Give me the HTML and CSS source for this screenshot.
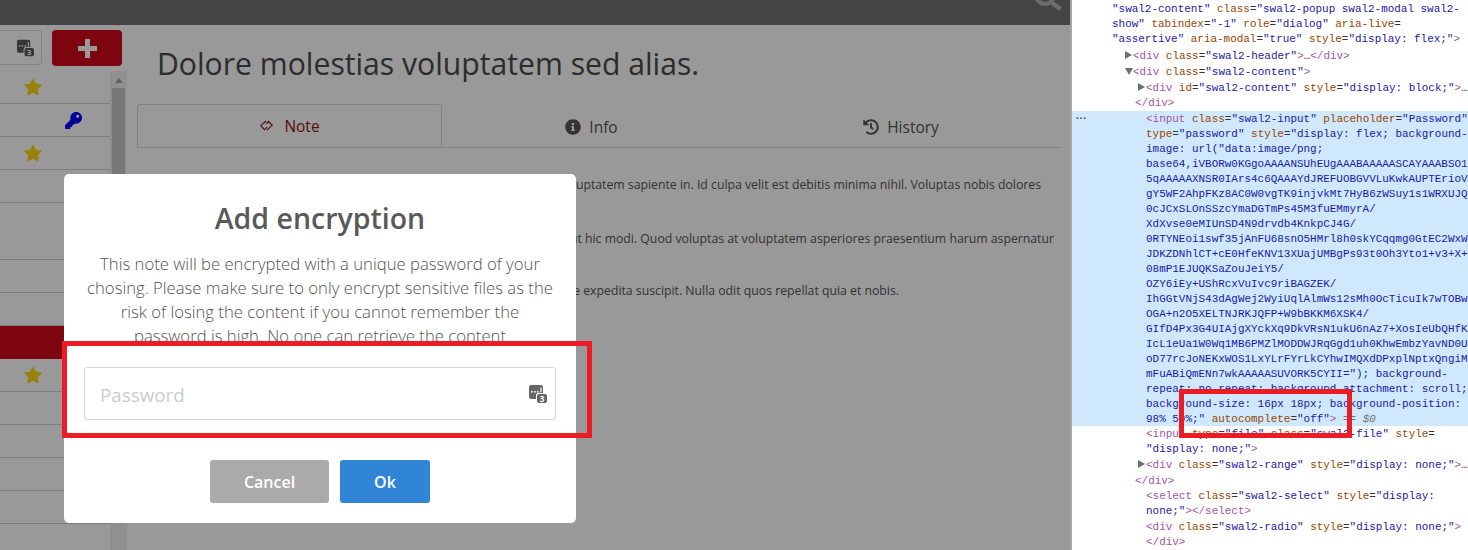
FILE: index.html
```html
<!DOCTYPE html>
<html lang="en">
<head>
<meta charset="utf-8">
<title>Add encryption</title>
<link rel="stylesheet" href="styles.css">
</head>
<body>
<svg class="defs" width="0" height="0" aria-hidden="true">
  <symbol id="star" viewBox="0 0 576 512"><path d="M259.3 17.8L194 150.2 47.9 171.5c-26.2 3.8-36.7 36.1-17.7 54.6l105.7 103-25 145.5c-4.5 26.3 23.2 46 46.4 33.7L288 439.6l130.7 68.7c23.2 12.2 50.9-7.4 46.4-33.7l-25-145.5 105.7-103c19-18.5 8.5-50.8-17.7-54.6L382 150.2 316.7 17.8c-11.7-23.6-45.6-23.9-57.4 0z"/></symbol>
  <symbol id="key" viewBox="0 0 512 512"><path d="M512 176.001C512 273.203 433.202 352 336 352c-11.22 0-22.19-1.062-32.827-3.069l-24.012 27.014A23.999 23.999 0 0 1 261.223 384H224v40c0 13.255-10.745 24-24 24h-40v40c0 13.255-10.745 24-24 24H24c-13.255 0-24-10.745-24-24v-78.059c0-6.365 2.529-12.47 7.029-16.971l161.802-161.802C163.108 213.814 160 195.271 160 176 160 78.798 238.797.001 335.999 0 433.488-.001 512 78.511 512 176.001zM336 128c0 26.51 21.49 48 48 48s48-21.49 48-48-21.49-48-48-48-48 21.49-48 48z"/></symbol>
  <symbol id="info" viewBox="0 0 512 512"><path d="M256 8C119.043 8 8 119.083 8 256c0 136.997 111.043 248 248 248s248-111.003 248-248C504 119.083 392.957 8 256 8zm0 110c23.196 0 42 18.804 42 42s-18.804 42-42 42-42-18.804-42-42 18.804-42 42-42zm56 254c0 6.627-5.373 12-12 12h-88c-6.627 0-12-5.373-12-12v-24c0-6.627 5.373-12 12-12h12v-64h-12c-6.627 0-12-5.373-12-12v-24c0-6.627 5.373-12 12-12h64c6.627 0 12 5.373 12 12v100h12c6.627 0 12 5.373 12 12v24z"/></symbol>
  <symbol id="history" viewBox="0 0 512 512"><path d="M504 255.531c.253 136.64-111.18 248.372-247.82 248.468-59.015.042-113.223-20.53-155.822-54.911-11.077-8.94-11.905-25.541-1.839-35.607l11.267-11.267c8.609-8.609 22.353-9.551 31.891-1.984C173.062 425.135 212.781 440 256 440c101.705 0 184-82.311 184-184 0-101.705-82.311-184-184-184-48.814 0-93.149 18.969-126.068 49.932l50.754 50.754c10.08 10.08 2.941 27.314-11.313 27.314H24c-8.837 0-16-7.163-16-16V38.627c0-14.254 17.234-21.393 27.314-11.314l49.372 49.372C129.209 34.136 189.552 8 256 8c136.81 0 247.747 110.78 248 247.531zm-180.912 78.784l9.823-12.63c8.138-10.463 6.253-25.542-4.21-33.679L288 256.349V152c0-13.255-10.745-24-24-24h-16c-13.255 0-24 10.745-24 24v135.651l65.409 50.874c10.463 8.137 25.541 6.253 33.679-4.21z"/></symbol>
  <symbol id="pw" viewBox="0 0 18 18">
    <path d="M2 0h10a2 2 0 0 1 2 2v6H9.500A2.500 2.500 0 0 0 7 10.500V14H2a2 2 0 0 1-2-2V2a2 2 0 0 1 2-2z"/>
    <rect x="8" y="9" width="10" height="9" rx="2"/>
    <g fill="#fff"><rect x="2" y="6" width="1.600" height="1.600"/><rect x="5" y="6" width="1.600" height="1.600"/><rect x="8" y="6" width="1.600" height="1.600"/><rect x="11.400" y="2.500" width="1.200" height="5"/></g>
  </symbol>
</svg>

<div class="page">
  <div class="app">
    <header class="topbar">
      <svg class="search" width="30" height="25" viewBox="0 0 30 25" aria-hidden="true"><circle cx="11" cy="-5" r="9" fill="none" stroke="currentColor" stroke-width="4"/><path d="M17 2l8 6" stroke="currentColor" stroke-width="4.5" stroke-linecap="round"/></svg>
    </header>
    <div class="workspace">
      <aside class="sidebar">
        <div class="toolbar">
          <div class="search-box"><svg class="pw-icon" width="17" height="18" viewBox="0 0 18 18"><use href="#pw"/><text class="pw-digit" x="13" y="16.500" text-anchor="middle">3</text></svg></div>
          <button class="add-btn" type="button"><span class="plus"></span></button>
        </div>
        <div class="list-wrap">
          <ul class="list">
            <li class="row"><svg class="star" width="18" height="16"><use href="#star"/></svg></li>
            <li class="row row-key"><svg class="key" width="17" height="17"><use href="#key"/></svg></li>
            <li class="row"><svg class="star" width="18" height="16"><use href="#star"/></svg></li>
            <li class="row"></li>
            <li class="row row-tall"></li>
            <li class="row"></li>
            <li class="row"></li>
            <li class="row row-active"></li>
            <li class="row"><svg class="star" width="18" height="16"><use href="#star"/></svg></li>
            <li class="row"></li>
            <li class="row"></li>
            <li class="row"></li>
            <li class="row"></li>
            <li class="row"></li>
          </ul>
          <div class="scrollbar"><div class="scroll-up"></div><div class="scroll-thumb"></div></div>
        </div>
      </aside>
      <main class="content">
        <h1 class="note-title">Dolore molestias voluptatem sed alias.</h1>
        <nav class="tabs">
          <a class="tab tab-active"><svg class="tab-icon-note" width="15" height="11" viewBox="0 0 15 11" aria-hidden="true"><path d="M7 1L1.800 5.700 5.500 9.600 8 7.200M8 10L13.200 5.300 9.500 1.400 7 3.800" fill="none" stroke="currentColor" stroke-width="1.100"/></svg>Note</a>
          <a class="tab"><svg class="tab-icon" width="16" height="16"><use href="#info"/></svg>Info</a>
          <a class="tab"><svg class="tab-icon" width="16" height="16"><use href="#history"/></svg>History</a>
        </nav>
        <p class="para para-1">Sit quaerat sint quia eos ut voluptatem sapiente in. Id culpa velit est debitis minima nihil. Voluptas nobis dolores</p>
        <p class="para para-2">Nam voluptas ut hic modi. Quod voluptas at voluptatem asperiores praesentium harum aspernatur</p>
        <p class="para para-3">Sapiente expedita suscipit. Nulla odit quos repellat quia et nobis.</p>
      </main>
    </div>
    <div class="backdrop"></div>
    <section class="modal" role="dialog">
      <h2 class="modal-title">Add encryption</h2>
      <div class="modal-text">This note will be encrypted with a unique password of your chosing. Please make sure to only encrypt sensitive files as the risk of losing the content if you cannot remember the password is high. No one can retrieve the content</div>
      <div class="modal-input"><span class="placeholder">Password</span><svg class="pw-icon-modal" width="18" height="18" viewBox="0 0 18 18"><use href="#pw"/><text class="pw-digit" x="13" y="16.500" text-anchor="middle">3</text></svg></div>
      <div class="modal-actions">
        <button class="btn btn-cancel" type="button">Cancel</button>
        <button class="btn btn-ok" type="button">Ok</button>
      </div>
    </section>
    <div class="callout callout-input"></div>
  </div>

  <aside class="devtools">
    <div class="node sp2 i1">
      <div class="ln"><span class="v">"swal2-content"</span> <span class="a">class</span>=<span class="v">"swal2-popup swal2-modal swal2-</span></div>
      <div class="ln"><span class="v">show"</span> <span class="a">tabindex</span>=<span class="v">"-1"</span> <span class="a">role</span>=<span class="v">"dialog"</span> <span class="a">aria-live</span>=</div>
      <div class="ln"><span class="v">"assertive"</span> <span class="a">aria-modal</span>=<span class="v">"true"</span> <span class="a">style</span>=<span class="v">"display: flex;"</span><span class="t">&gt;</span></div>
    </div>
    <div class="node sp i2"><div class="ln"><span class="arrow"></span><span class="t">&lt;div</span> <span class="a">class</span>=<span class="v">"swal2-header"</span><span class="t">&gt;</span>…<span class="t">&lt;/div&gt;</span></div></div>
    <div class="node sp i2"><div class="ln"><span class="arrow arrow-open"></span><span class="t">&lt;div</span> <span class="a">class</span>=<span class="v">"swal2-content"</span><span class="t">&gt;</span></div></div>
    <div class="node i3"><div class="ln"><span class="arrow"></span><span class="t">&lt;div</span> <span class="a">id</span>=<span class="v">"swal2-content"</span> <span class="a">style</span>=<span class="v">"display: block;"</span><span class="t">&gt;</span>…</div></div>
    <div class="node sp i2b"><div class="ln"><span class="t">&lt;/div&gt;</span></div></div>
    <div class="node i3 selected">
      <span class="dots">···</span>
      <div class="ln"><span class="t">&lt;input</span> <span class="a">class</span>=<span class="v">"swal2-input"</span> <span class="a">placeholder</span>=<span class="v">"Password"</span></div>
      <div class="ln"><span class="a">type</span>=<span class="v">"password"</span> <span class="a">style</span>=<span class="v">"display: flex; background-</span></div>
      <div class="ln v">image: url("data:image/png;</div>
      <div class="ln v">base64,iVBORw0KGgoAAAANSUhEUgAAABAAAAASCAYAAABSO1</div>
      <div class="ln v">5qAAAAAXNSR0IArs4c6QAAAYdJREFUOBGVVLuKwkAUPTErioV</div>
      <div class="ln v">gY5WF2AhpFKz8AC0W0vgTK9injvkMt7HyB6zWSuy1s1WRXUJQ</div>
      <div class="ln v">0cJCxSLOnSSzcYmaDGTmPs45M3fuEMmyrA/</div>
      <div class="ln v">XdXvse0eMIUnSD4N9drvdb4KnkpCJ4G/</div>
      <div class="ln v">0RTYNEoi1swf35jAnFU68snO5HMrl8h0skYCqqmg0GtEC2WxW</div>
      <div class="ln v">JDKZDNhlCT+cE0HfeKNV13XUajUMBgPs93t0Oh3Yto1+v3+X+</div>
      <div class="ln v">08mP1EJUQKSaZouJeiY5/</div>
      <div class="ln v">OZY6iEy+UShRcxVuIvc9riBAGZEK/</div>
      <div class="ln v">IhGGtVNjS43dAgWej2WyiUqlAlmWs12sMh0OcTicuIk7wTOBw</div>
      <div class="ln v">OGA+n2O5XELTNJRKJQFP+W9bBKKM6XSK4/</div>
      <div class="ln v">GIfD4Px3G4UIAjgXYckXq9DkVRsN1ukU6nAz7+XosIeUbQHfK</div>
      <div class="ln v">IcL1eUa1W0Wq1MB6PMZlMODDWJRqGgd1uh0KhwEmbzYavND0U</div>
      <div class="ln v">oD77rcJoNEKxWOS1LxYLrFYrLkCYhwIMQXdDPxplNptxQngiM</div>
      <div class="ln v">mFuABiQmENn7wkAAAAASUVORK5CYII="); background-</div>
      <div class="ln v">repeat: no-repeat; background-attachment: scroll;</div>
      <div class="ln v">background-size: 16px 18px; background-position:</div>
      <div class="ln"><span class="v">98% 50%;"</span> <span class="a">autocomplete</span>=<span class="v">"off"</span><span class="t">&gt;</span> <span class="eq">== <em>$0</em></span></div>
    </div>
    <div class="node sp i3">
      <div class="ln"><span class="t">&lt;input</span> <span class="a">type</span>=<span class="v">"file"</span> <span class="a">class</span>=<span class="v">"swal2-file"</span> <span class="a">style</span>=</div>
      <div class="ln"><span class="v">"display: none;"</span><span class="t">&gt;</span></div>
    </div>
    <div class="node sp i3"><div class="ln"><span class="arrow"></span><span class="t">&lt;div</span> <span class="a">class</span>=<span class="v">"swal2-range"</span> <span class="a">style</span>=<span class="v">"display: none;"</span><span class="t">&gt;</span>…</div></div>
    <div class="node i2b"><div class="ln"><span class="t">&lt;/div&gt;</span></div></div>
    <div class="node sp i3">
      <div class="ln"><span class="t">&lt;select</span> <span class="a">class</span>=<span class="v">"swal2-select"</span> <span class="a">style</span>=<span class="v">"display:</span></div>
      <div class="ln"><span class="v">none;"</span><span class="t">&gt;&lt;/select&gt;</span></div>
    </div>
    <div class="node i3">
      <div class="ln"><span class="t">&lt;div</span> <span class="a">class</span>=<span class="v">"swal2-radio"</span> <span class="a">style</span>=<span class="v">"display: none;"</span><span class="t">&gt;</span></div>
      <div class="ln"><span class="t">&lt;/div&gt;</span></div>
    </div>
    <div class="callout callout-code"></div>
  </aside>
</div>
</body>
</html>
```

FILE: styles.css
```css
* { box-sizing: border-box; }
html, body { margin: 0; padding: 0; height: 100%; }
body { overflow: hidden; background: #fff; font-family: "Open Sans", "Liberation Sans", sans-serif; color: #333; }
.defs { position: absolute; }

.page { display: flex; width: 1468px; height: 550px; overflow: hidden; }

/* app under the modal */
.app { position: relative; width: 1070px; height: 550px; flex: none; display: flex; flex-direction: column; overflow: hidden; }
.topbar { height: 25px; flex: none; background: #727272; color: #b4b4b4; display: flex; justify-content: flex-end; padding-right: 6px; overflow: hidden; }
.search { display: block; }
.workspace { flex: 1; display: flex; min-height: 0; }

.sidebar { width: 127px; flex: none; display: flex; flex-direction: column; }
.toolbar { height: 46px; flex: none; display: flex; gap: 10px; padding-top: 5px; width: 122px; }
.search-box { width: 42px; height: 35px; border: 1px solid #ddd; border-left: 0; border-radius: 0 4px 4px 0; display: flex; align-items: center; padding-left: 17px; }
.pw-icon { fill: #5a5a5a; }
.pw-digit { fill: #fff; font-family: "Open Sans", sans-serif; font-size: 8px; font-weight: 700; }
.add-btn { width: 70px; height: 36px; padding: 0; border: 0; border-radius: 4px; background: #d0091a; display: flex; align-items: center; justify-content: center; }
.plus { width: 19px; height: 19px; display: block; background:
  linear-gradient(#fff, #fff) center / 100% 5px no-repeat,
  linear-gradient(#fff, #fff) center / 5px 100% no-repeat; border-radius: 1px; }

.list-wrap { flex: 1; display: flex; min-height: 0; }
.list { list-style: none; margin: 0; padding: 0; width: 110px; flex: none; overflow: hidden; }
.row { height: 33px; border-bottom: 1px solid #d0d0d0; display: flex; align-items: center; padding-left: 24px; flex: none; }
.row-tall { height: 57px; }
.row-key { padding-left: 65px; }
.row-active { background: #d0091a; border-bottom-color: #d0091a; }
.star { fill: #ffd60f; }
.key { fill: #0000ff; }

.scrollbar { width: 17px; flex: none; background: #f1f1f1; padding: 1px 2px 0; }
.scroll-up { width: 0; height: 0; margin: 6px auto 0; border: 4px solid transparent; border-top: 0; border-bottom: 5px solid #a3a3a3; }
.scroll-thumb { height: 300px; margin-top: 5px; background: #c6c6c6; }

.content { flex: 1; min-width: 0; padding: 0 9px 0 10px; }
.note-title { margin: 13px 0 0 20px; font-size: 30.15px; line-height: 52px; font-weight: 400; color: #4a4a4a; white-space: nowrap; }
.tabs { display: grid; grid-template-columns: 305px 299px 1fr; height: 44px; margin-top: 14px; border-bottom: 1px solid #d8d8d8; }
.tab { display: flex; align-items: center; justify-content: center; gap: 8px; font-size: 15.5px; color: #555; padding-top: 3px; }
.tab-active { color: #960f1a; gap: 10px; padding-top: 0; padding-bottom: 1px; border: 1px solid #d8d8d8; border-bottom: 0; border-radius: 4px 4px 0 0; }
.tab-icon { fill: currentColor; flex: none; }
.tab-icon-note { flex: none; }
.para { margin: 0; font-size: 12.25px; line-height: 18px; color: #555; white-space: nowrap; text-align: right; }
.para-1 { margin-top: 28px; padding-right: 20px; }
.para-2 { margin-top: 36px; padding-right: 7px; }
.para-3 { margin-top: 34px; padding-right: 162px; }

/* overlay layers */
.backdrop { position: absolute; inset: 0; background: rgba(0, 0, 0, .4); }
.modal { position: absolute; left: 64px; top: 174px; width: 512px; height: 349px; background: #fff; border-radius: 5px; padding: 20px 20px 0; display: flex; flex-direction: column; align-items: center; }
.modal-title { margin: 0; font-size: 28.5px; line-height: 48px; font-weight: 600; color: #595959; }
.modal-text { margin-top: 10px; height: 96px; overflow: hidden; font-size: 16.7px; line-height: 24px; font-weight: 300; color: #545454; text-align: center; width: 100%; }
.modal-input { margin-top: 19px; width: 472px; height: 53px; flex: none; border: 1px solid #d9d9d9; border-radius: 3px; display: flex; align-items: center; justify-content: space-between; padding: 0 8px 0 15px; }
.placeholder { font-size: 18.8px; color: #ccc; padding-top: 2px; }
.pw-icon-modal { fill: #666; }
.modal-actions { margin-top: 40px; display: flex; gap: 11px; }
.btn { height: 43px; border: 0; border-radius: 3px; color: #fff; font-family: inherit; font-size: 16px; font-weight: 600; padding: 0; }
.btn-cancel { width: 119px; background: #aaa; }
.btn-ok { width: 90px; background: #3085d6; }

.callout { position: absolute; border: 5px solid #ed1c24; }
.callout-input { left: 62px; top: 341px; width: 530px; height: 97px; }

/* devtools */
.devtools { position: relative; flex: 1; min-width: 0; height: 550px; overflow: hidden; padding-top: 1px; border-left: 2px solid #a6a6a6; font-family: "Liberation Mono", monospace; font-size: 10.95px; line-height: 15px; color: #333; background: #fff; }
.node { position: relative; white-space: nowrap; }
.sp { margin-bottom: 1px; }
.sp2 { margin-bottom: 2px; }
.i1 { padding-left: 40px; }
.i2 { padding-left: 61px; }
.i2b { padding-left: 63px; }
.i3 { padding-left: 74px; }
.ln { height: 15px; padding-top: 1px; }
.selected { background: #cfe8fc; }
.dots { position: absolute; left: 2px; top: 0; color: #555; letter-spacing: -3px; font-weight: 700; }
.t { color: #a8539f; }
.a { color: #994500; }
.v { color: #1a1aa6; }
.eq { color: #777; }
.eq em { font-style: italic; }
.arrow { display: inline-block; width: 0; height: 0; margin-left: -8px; margin-right: 1px; border-left: 7px solid #6e6e6e; border-top: 4px solid transparent; border-bottom: 4px solid transparent; }
.arrow-open { border-left: 4px solid transparent; border-right: 4px solid transparent; border-top: 7px solid #6e6e6e; border-bottom: 0; margin-right: 0; }
.callout-code { left: 107px; top: 389px; width: 173px; height: 49px; }
```
